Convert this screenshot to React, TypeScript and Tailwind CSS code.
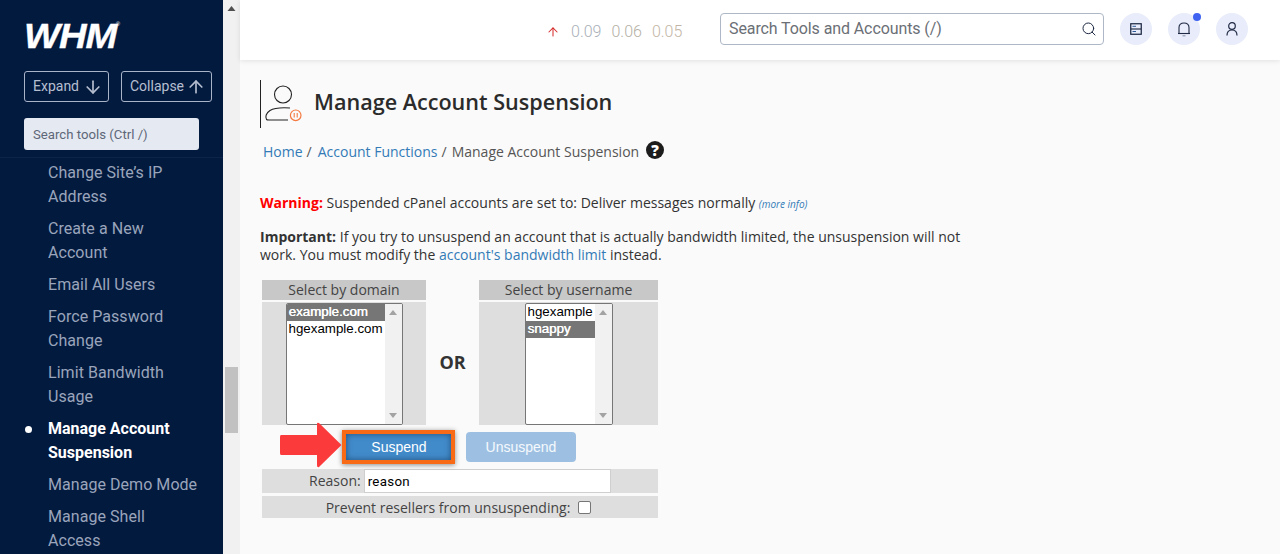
import React from "react";
import { ArrowDown, ArrowUp, Search } from "lucide-react";

const items: { lines: string[]; active?: boolean }[] = [
  { lines: ["Change Site’s IP", "Address"] },
  { lines: ["Create a New", "Account"] },
  { lines: ["Email All Users"] },
  { lines: ["Force Password", "Change"] },
  { lines: ["Limit Bandwidth", "Usage"] },
  { lines: ["Manage Account", "Suspension"], active: true },
  { lines: ["Manage Demo Mode"] },
  { lines: ["Manage Shell", "Access"] },
];

function Sidebar() {
  return (
    <aside className="w-[223px] h-full shrink-0 bg-[#031a3f] flex flex-col font-['Roboto',sans-serif] overflow-hidden">
      <div className="h-[158px] shrink-0 pl-6 pt-[17px] border-b border-[#0c2449]">
        <div className="h-[36px] w-[100px] flex items-start origin-left scale-x-[1.09] text-white font-['Liberation_Sans',sans-serif] font-bold italic text-[35px] leading-[38px] tracking-[-1px] [-webkit-text-stroke:0.4px_white]">
          WHM<span className="text-[5px] leading-[14px] not-italic font-normal tracking-normal [-webkit-text-stroke:0]">®</span>
        </div>
        <div className="flex gap-[12px] mt-[18px]">
          <button className="h-[31px] w-[85px] shrink-0 border border-[#a9b4c8] rounded-[3px] flex items-center justify-between pl-2 pr-[5px] text-[14px] text-[#b6bfd0]">
            Expand <ArrowDown size={20} strokeWidth={2} />
          </button>
          <button className="h-[31px] w-[91px] shrink-0 border border-[#a9b4c8] rounded-[3px] flex items-center justify-between pl-2 pr-[5px] text-[14px] text-[#b6bfd0]">
            Collapse <ArrowUp size={20} strokeWidth={2} />
          </button>
        </div>
        <div className="mt-4 w-[175px] h-[32px] rounded-[3px] bg-[#e5e9f2] flex items-center pl-[9px] pt-[1px] text-[13.2px] text-[#5d6778]">
          Search tools (Ctrl /)
        </div>
      </div>
      <ul className="mt-[-1px]">
        {items.map((it) => (
          <li key={it.lines[0]} className={`relative py-1 pl-12 pr-2 text-[16px] leading-[24px] ${it.active ? "text-white font-bold" : "text-[#9aa5bb] tracking-[0.05px]"}`}>
            {it.active && <span className="absolute left-[25px] top-[13px] w-[7px] h-[7px] rounded-full bg-white" />}
            {it.lines.map((l) => (
              <div key={l} className="whitespace-nowrap">{l}</div>
            ))}
          </li>
        ))}
      </ul>
    </aside>
  );
}

function PageScrollbar() {
  return (
    <div className="w-[17px] h-full shrink-0 bg-[#f1f1f1] flex flex-col items-center">
      <svg width="17" height="17" viewBox="0 0 17 17" className="shrink-0">
        <path d="M4.5 11 L8.5 6 L12.5 11 Z" fill="#505050" />
      </svg>
      <div className="w-[13px] h-[66px] bg-[#c1c1c1] mt-[350px]" />
    </div>
  );
}

function RoundIcon({ children, dot }: { children: React.ReactNode; dot?: boolean }) {
  return (
    <div className="relative w-8 h-8 rounded-full bg-[#e9ecfa] flex items-center justify-center text-[#1f2a44]">
      {children}
      {dot && <span className="absolute right-[-1px] top-[0px] w-[8px] h-[8px] rounded-full bg-[#3f63f0]" />}
    </div>
  );
}

function Header() {
  return (
    <header className="h-[60px] shrink-0 bg-white shadow-[0_1px_5px_rgba(0,0,0,0.1)] flex items-center font-['Roboto',sans-serif] relative">
      <div className="ml-[307px] flex items-center text-[16px] font-light text-[#a9afb8] w-[173px] mt-[3px]">
        <ArrowUp size={14} className="text-[#d62f2f] mr-[11px] ml-[-1px]" strokeWidth={1.8} />
        <span className="mr-[10px]">0.09</span>
        <span className="mr-[10px] text-[#b4b0a4]">0.06</span>
        <span className="text-[#c2b5a5]">0.05</span>
      </div>
      <div className="w-[384px] h-[32px] border border-[#aeb7c6] rounded-[4px] flex items-center justify-between pl-2 pr-[6px] text-[16px] tracking-[-0.1px] text-[#6b6f76] mt-[-2px]">
        <span>Search Tools and Accounts (/)</span>
        <Search size={16} className="text-[#1f2a44]" strokeWidth={1.5} />
      </div>
      <div className="flex gap-4 ml-4 mt-[-2px]">
        <RoundIcon>
          <svg width="12" height="12" viewBox="0 0 12 12" fill="none">
            <rect x="0.75" y="0.75" width="10.5" height="10.5" stroke="#16213c" strokeWidth="1.2" />
            <line x1="1" y1="6" x2="11" y2="6" stroke="#16213c" strokeWidth="1.1" />
            <rect x="2.5" y="2.8" width="3.5" height="1" fill="#2d5a99" />
            <rect x="2.5" y="8" width="3.5" height="1" fill="#2d5a99" />
          </svg>
        </RoundIcon>
        <RoundIcon dot>
          <svg width="14" height="15" viewBox="0 0 14 15" fill="none" stroke="#1f2a44" strokeWidth="1.1">
            <path d="M2 11 V5.5 C2 2.5 4 1 7 1 C10 1 12 2.5 12 5.5 V11" />
            <line x1="1" y1="11.5" x2="13" y2="11.5" />
            <line x1="5.5" y1="13.8" x2="8.5" y2="13.8" stroke="#8d97ad" />
          </svg>
        </RoundIcon>
        <RoundIcon>
          <svg width="12" height="14" viewBox="0 0 12 14" fill="none" stroke="#1f2a44" strokeWidth="1.2">
            <circle cx="6" cy="4" r="3.3" />
            <path d="M1 13.5 C1 10 3 8 6 8 C9 8 11 10 11 13.5" />
          </svg>
        </RoundIcon>
      </div>
    </header>
  );
}

function ListBox({ width, rows, selected }: { width: string; rows: string[]; selected: number }) {
  return (
    <div className={`${width} h-[122px] bg-white border border-[#767676] rounded-[2px] flex overflow-hidden font-['Liberation_Sans',sans-serif] text-[13.33px] leading-[15px] text-black`}>
      <div className="flex-1 min-w-0">
        {rows.map((r, i) => (
          <div key={r} className={`h-[17px] pl-[2px] whitespace-nowrap ${i === selected ? "bg-[#767676] text-white [text-shadow:0.4px_0_0_white]" : ""}`}>{r}</div>
        ))}
      </div>
      <div className="w-[17px] shrink-0 bg-[#f1f1f1] flex flex-col justify-between items-center py-[6px]">
        <svg width="8" height="5" viewBox="0 0 8 5"><path d="M0 5 L4 0 L8 5 Z" fill="#a3a3a3" /></svg>
        <svg width="8" height="5" viewBox="0 0 8 5"><path d="M0 0 L8 0 L4 5 Z" fill="#a3a3a3" /></svg>
      </div>
    </div>
  );
}

function PageIcon() {
  return (
    <svg width="42" height="48" viewBox="0 0 42 48" fill="none" className="shrink-0">
      <line x1="0.5" y1="0" x2="0.5" y2="48" stroke="#222" strokeWidth="1" />
      <circle cx="23" cy="14.5" r="8.5" stroke="#222" strokeWidth="1.1" />
      <path d="M30 28 C22 27.5 14 28 10 30.5 C6 33 5 37 6.5 39.5 Q7 40 9 40 H28" stroke="#222" strokeWidth="1.1" />
      <circle cx="35.7" cy="35.3" r="5.3" stroke="#f47a42" strokeWidth="1.2" fill="#fafafa" />
      <line x1="34.2" y1="33" x2="34.2" y2="37.6" stroke="#f47a42" strokeWidth="1.1" />
      <line x1="37.2" y1="33" x2="37.2" y2="37.6" stroke="#f47a42" strokeWidth="1.1" />
    </svg>
  );
}

function Arrow() {
  return (
    <svg width="62" height="46" viewBox="0 0 62 46" className="absolute left-[-62px] top-[-8px]">
      <path d="M1 13 H37 V2 Q37 0 39 1 L61.5 23 L39 45 Q37 46 37 43 V33 H1 Q0 33 0 31 V15 Q0 13 1 13 Z" fill="#fb3b3b" />
    </svg>
  );
}

function Content() {
  return (
    <div className="flex-1 bg-[#fafafa] pl-5 pt-5 font-['Open_Sans',sans-serif] text-[14px] leading-[18px] text-[#333] overflow-hidden">
      <div className="flex items-center gap-3 h-[48px]">
        <PageIcon />
        <h1 className="text-[21.6px] font-semibold leading-[30px] text-[#2b2b2b] mt-[-4px]">Manage Account Suspension</h1>
      </div>
      <nav className="mt-[12px] pl-[3px] flex items-center h-[24px]">
        <a className="text-[#337ab7]">Home</a>
        <span className="ml-[4px] mr-[6px] text-[#555]">/</span>
        <a className="text-[#337ab7]">Account Functions</a>
        <span className="ml-[4px] mr-[5px] text-[#555]">/</span>
        <span className="text-[#555]">Manage Account Suspension</span>
        <span className="ml-[7px] w-[18px] h-[18px] rounded-full bg-[#1c1c1c] text-white text-[15px] font-extrabold leading-[18px] text-center mt-[-4px]">?</span>
      </nav>
      <p className="mt-[30px]">
        <b className="text-[#f00]">Warning:</b> Suspended cPanel accounts are set to: Deliver messages normally <a className="italic text-[10px] text-[#337ab7]">(more info)</a>
      </p>
      <div className="mt-[15px] whitespace-nowrap">
        <div><b>Important:</b> If you try to unsuspend an account that is actually bandwidth limited, the unsuspension will not</div>
        <div>work. You must modify the <a className="text-[#337ab7]">account's bandwidth limit</a> instead.</div>
      </div>
      <form className="mt-4 ml-[2px] w-[396px]">
        <div className="grid grid-cols-[164px_53px_179px]">
          <div className="h-5 bg-[#c8c8c8] text-center text-[#444] pt-px">Select by domain</div>
          <div />
          <div className="h-5 bg-[#c8c8c8] text-center text-[#444] pt-px">Select by username</div>
          <div className="mt-[2px] h-[123px] bg-[#dedede] flex justify-center pt-px"><ListBox width="w-[117px]" rows={["example.com", "hgexample.com"]} selected={0} /></div>
          <div className="mt-[2px] flex items-center justify-center text-[18px] font-bold text-[#333] pb-[3px]">OR</div>
          <div className="mt-[2px] h-[123px] bg-[#dedede] flex justify-center pt-px"><ListBox width="w-[88px]" rows={["hgexample", "snappy"]} selected={1} /></div>
        </div>
        <div className="mt-[5px] h-[34px] flex items-center pl-[80px] font-['Liberation_Sans',sans-serif] text-[14px]">
          <div className="relative">
            <Arrow />
            <button type="button" className="w-[113px] h-[34px] pl-[1px] bg-[#428bca] border-[4px] border-[#f96a17] text-white shadow-[inset_0_0_6px_#1f4f7c,0_1px_5px_rgba(0,0,0,0.45)]">Suspend</button>
          </div>
          <button type="button" className="ml-[11px] w-[110px] h-[30px] bg-[#9dc0e2] rounded-[4px] text-white/90">Unsuspend</button>
        </div>
        <div className="mt-[5px] h-[24px] bg-[#dedede] flex items-center pl-[47px] text-[#444]">
          <span>Reason:</span>
          <input readOnly value="reason" className="ml-[3px] w-[247px] h-[24px] bg-white border border-[#cfcfcf] px-[3px] text-[13.33px] tracking-[0.3px] text-black outline-none font-['Roboto',sans-serif]" />
        </div>
        <div className="mt-[3px] h-[22px] bg-[#dedede] flex items-center justify-center pr-[3px] text-[#444]">
          <span className="pt-px">Prevent resellers from unsuspending:</span>
          <span className="ml-[8px] w-[13px] h-[13px] bg-white border border-[#767676] rounded-[2px]" />
        </div>
      </form>
    </div>
  );
}

export default function App() {
  return (
    <div className="w-[1280px] h-[554px] flex overflow-hidden bg-white">
      <Sidebar />
      <PageScrollbar />
      <main className="flex-1 min-w-0 h-full flex flex-col">
        <Header />
        <Content />
      </main>
    </div>
  );
}
